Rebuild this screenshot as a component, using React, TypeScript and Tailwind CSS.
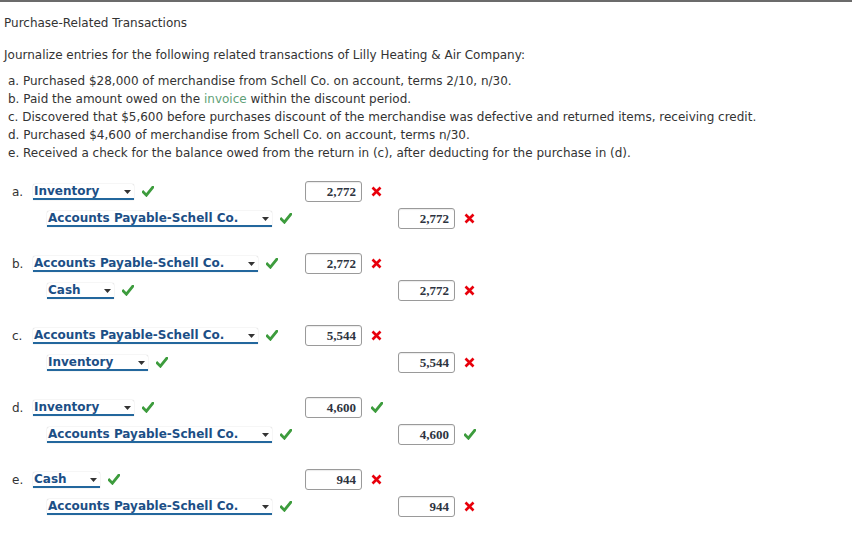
import React from "react";

const Check = () => (
  <svg width="12" height="11" viewBox="0 0 12 11" className="shrink-0">
    <path d="M1.2 6 L4.4 9.2 L10.8 1.2" fill="none" stroke="#3d9c3d" strokeWidth="2.8" strokeLinecap="square" strokeLinejoin="miter" />
  </svg>
);

const Cross = () => (
  <svg width="11" height="11" viewBox="0 0 11 11" className="shrink-0">
    <path d="M1.5 1.5 L9.5 9.5 M9.5 1.5 L1.5 9.5" fill="none" stroke="#e8000b" strokeWidth="2.6" />
  </svg>
);

const Select = ({ text, w }: { text: string; w: number }) => (
  <div
    className="relative h-[16px] bg-white border-b-2 border-[#23679d] rounded-t-[2px] shadow-[0_0_1px_rgba(0,0,0,0.35)] flex items-center"
    style={{ width: w }}
  >
    <span className="pl-[1px] text-[12px] leading-[14px] font-bold text-[#1c4f86] whitespace-nowrap" style={{ fontFamily: "'DejaVu Sans', Verdana, sans-serif" }}>
      {text}
    </span>
    <svg width="7" height="4" viewBox="0 0 7 4" className="absolute right-[3px] top-[6px]">
      <path d="M0 0 L7 0 L3.5 4 Z" fill="#333" />
    </svg>
  </div>
);

const Amount = ({ v }: { v: string }) => (
  <div className="w-[57px] h-[21px] border border-[#9a9a9a] rounded-[3px] bg-white flex items-center justify-end pr-[5px] shadow-[inset_0_1px_1px_rgba(0,0,0,0.08)]">
    <span className="text-[13px] font-bold text-[#2d3340]" style={{ fontFamily: "'Liberation Serif', Georgia, serif" }}>{v}</span>
  </div>
);

type Acc = { text: string; w: number };
type Entry = { l: string; d: Acc; c: Acc; dv: string; cv: string; dok: boolean; cok: boolean };

const INV = { text: "Inventory", w: 101 };
const APS = { text: "Accounts Payable-Schell Co.", w: 225 };
const APS1 = { text: "Accounts Payable-Schell Co.", w: 225 };
const CASH = { text: "Cash", w: 67 };

const entries: Entry[] = [
  { l: "a.", d: INV, c: APS, dv: "2,772", cv: "2,772", dok: false, cok: false },
  { l: "b.", d: APS1, c: CASH, dv: "2,772", cv: "2,772", dok: false, cok: false },
  { l: "c.", d: APS1, c: INV, dv: "5,544", cv: "5,544", dok: false, cok: false },
  { l: "d.", d: INV, c: APS, dv: "4,600", cv: "4,600", dok: true, cok: true },
  { l: "e.", d: CASH, c: APS, dv: "944", cv: "944", dok: false, cok: false },
];

export default function App() {
  return (
    <div className="w-[852px] h-[534px] bg-white border-t-2 border-[#6b6b6b] text-[#333] text-[12px]" style={{ fontFamily: "'DejaVu Sans', Verdana, sans-serif" }}>
      <div className="pl-[4px] pt-[13px] leading-[16px]">Purchase-Related Transactions</div>
      <div className="pl-[4px] pt-[16px] leading-[16px]">Journalize entries for the following related transactions of Lilly Heating &amp; Air Company:</div>
      <div className="pl-[8px] pt-[9px] leading-[18px]">
        <div>a. Purchased $28,000 of merchandise from Schell Co. on account, terms 2/10, n/30.</div>
        <div>b. Paid the amount owed on the <span className="text-[#5f9f77]">invoice</span> within the discount period.</div>
        <div>c. Discovered that $5,600 before purchases discount of the merchandise was defective and returned items, receiving credit.</div>
        <div>d. Purchased $4,600 of merchandise from Schell Co. on account, terms n/30.</div>
        <div>e. Received a check for the balance owed from the return in (c), after deducting for the purchase in (d).</div>
      </div>
      <div className="pt-[19px] flex flex-col gap-[24px]">
        {entries.map((e) => (
          <div key={e.l} className="flex flex-col gap-[6px]">
            <div className="flex items-center h-[21px]">
              <div className="w-[305px] flex items-center pl-[12px]">
                <span className="w-[21px]">{e.l}</span>
                <Select text={e.d.text} w={e.d.w} />
                <span className="ml-[8px]"><Check /></span>
              </div>
              <Amount v={e.dv} />
              <span className="ml-[9px]">{e.dok ? <Check /> : <Cross />}</span>
            </div>
            <div className="flex items-center h-[21px]">
              <div className="w-[398px] flex items-center pl-[47px]">
                <Select text={e.c.text} w={e.c.w} />
                <span className="ml-[8px]"><Check /></span>
              </div>
              <Amount v={e.cv} />
              <span className="ml-[9px]">{e.cok ? <Check /> : <Cross />}</span>
            </div>
          </div>
        ))}
      </div>
    </div>
  );
}
